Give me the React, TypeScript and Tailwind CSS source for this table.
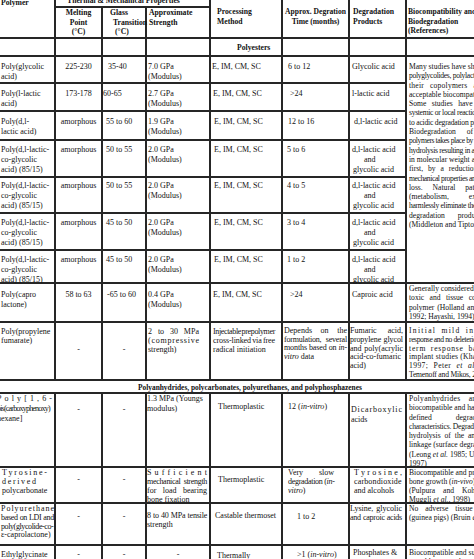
import React from "react";

type N = React.ReactNode;

const bd = "border-r-2 border-b-2 border-[#262626]";

function C({ c = "", children }: { c?: string; children?: N }) {
  return <div className={`${bd} whitespace-nowrap ${c}`}>{children}</div>;
}

// spread words (or letters) across the line, like justified print
function J({ w, c = "" }: { w: N[]; c?: string }) {
  return (
    <div className={`flex justify-between ${c}`}>
      {w.map((x, i) => (
        <span key={i}>{x}</span>
      ))}
    </div>
  );
}

const letters = (s: string) => s.split("");
const words = (s: string) => s.split(" ");

function Plga({ glass, time, pt }: { glass: string; time: string; pt: string }) {
  return (
    <>
      <C c={`pl-[4px] ${pt}`}>
        <div>Poly(d,l-lactic-</div>
        <div>co-glycolic</div>
        <div>acid) (85/15)</div>
      </C>
      <C c={`text-center ${pt}`}>amorphous</C>
      <C c={`pl-[3px] ${pt}`}>{glass}</C>
      <C c={`pl-[1px] ${pt}`}>
        <div>2.0 GPa</div>
        <div>(Modulus)</div>
      </C>
      <C c={`pl-[3px] ${pt}`}>E, IM, CM, SC</C>
      <C c={`pl-[4px] ${pt}`}>{time}</C>
      <C c={pt}>
        <div className="pl-[2px]">d,l-lactic acid</div>
        <div className="pl-[14px]">and</div>
        <div className="pl-[3px]">glycolic acid</div>
      </C>
    </>
  );
}

export default function App() {
  return (
    <div className="w-[474px] h-[559px] overflow-hidden bg-white">
      <div className="mt-[-8px] ml-[-3px] w-max grid grid-cols-[59px_47px_44px_64px_72px_67px_57px_110px] grid-rows-[16px_31px_18px_27px_28px_29px_37px_36px_37px_33px_39px_58px_13px_74px_36px_42px_40px] font-['Liberation_Serif',serif] text-[8px] leading-[10px] text-[#111]">
        {/* header */}
        <C c="row-span-2 pl-[4px] pt-[6px] font-bold text-[7.7px]">Polymer</C>
        <C c="col-span-3 pl-[11px] pt-[4px] font-bold text-[7.7px] leading-[9.5px]">Thermal &amp; Mechanical Properties</C>
        <C c="row-span-2 pl-[6px] pt-[15px] font-bold text-[7.7px] leading-[9.5px]">
          <div>Processing</div>
          <div>Method</div>
        </C>
        <C c="row-span-2 text-center pt-[15px] font-bold text-[7.6px] leading-[9.5px]">
          <div>Approx. Degration</div>
          <div>Time (months)</div>
        </C>
        <C c="row-span-2 pl-[3px] pt-[15px] font-bold text-[7.7px] leading-[9.5px]">
          <div>Degradation</div>
          <div>Products</div>
        </C>
        <C c="row-span-2 pl-[1px] pt-[15px] font-bold text-[7.6px] leading-[9.5px]">
          <div>Biocompatibility and</div>
          <div>Biodegradation</div>
          <div>(References)</div>
        </C>
        <C c="text-center font-bold text-[7.7px] leading-[9.5px]">
          <div>Melting</div>
          <div>Point</div>
          <div>(°C)</div>
        </C>
        <C c="font-bold text-[7.7px] leading-[9.5px]">
          <div className="pl-[7px]">Glass</div>
          <div className="pl-[10px]">Transition</div>
          <div className="pl-[12px]">(°C)</div>
        </C>
        <C c="pl-[2px] font-bold text-[7.7px] leading-[9.5px]">
          <div>Approximate</div>
          <div>Strength</div>
        </C>

        {/* polyesters */}
        <C />
        <C />
        <C />
        <C />
        <C c="pl-[26px] pt-[4px] font-bold text-[7.7px]">Polyesters</C>
        <C />
        <C />
        <C />

        {/* poly(glycolic acid) */}
        <C c="pl-[4px] pt-[5px]">
          <div>Poly(glycolic</div>
          <div>acid)</div>
        </C>
        <C c="text-center pt-[5px]">225-230</C>
        <C c="pl-[5px] pt-[5px]">35-40</C>
        <C c="pl-[1px] pt-[5px]">
          <div>7.0 GPa</div>
          <div>(Modulus)</div>
        </C>
        <C c="pl-[1px] pt-[5px]">E, IM, CM, SC</C>
        <C c="pl-[5px] pt-[5px]">6 to 12</C>
        <C c="pl-[2px] pt-[5px]">Glycolic acid</C>
        <C c="row-span-7 pl-[2px] pt-[5px] text-[7.6px] leading-[9.3px]">
          <div>Many studies have shown that</div>
          <div className="tracking-[-0.3px]">polyglycolides, polylactides and</div>
          <div className="tracking-[0.2px] [word-spacing:4px]">their copolymers are</div>
          <div>acceptable biocompatible.</div>
          <div className="[word-spacing:3.5px]">Some studies have shown</div>
          <div className="tracking-[-0.3px]">systemic or local reactions due</div>
          <div className="tracking-[-0.2px]">to acidic degradation products.</div>
          <div className="[word-spacing:9px]">Biodegradation of these</div>
          <div className="tracking-[-0.4px]">polymers takes place by bulk</div>
          <div className="tracking-[-0.3px]">hydrolysis resulting in a decrease</div>
          <div>in molecular weight at</div>
          <div className="[word-spacing:3px]">first, by a reduction in</div>
          <div className="tracking-[-0.4px]">mechanical properties and mass</div>
          <div className="[word-spacing:8px]">loss. Natural pathways</div>
          <div className="[word-spacing:18px]">(metabolism, excretion)</div>
          <div className="tracking-[-0.3px]">harmlessly eliminate the</div>
          <div className="[word-spacing:11px]">degradation products</div>
          <div>(Middleton and Tipton, 2000)</div>
        </C>

        {/* poly(l-lactic acid) */}
        <C c="pl-[4px] pt-[5px]">
          <div>Poly(l-lactic</div>
          <div>acid)</div>
        </C>
        <C c="text-center pt-[5px]">173-178</C>
        <C c="pl-[0px] pt-[5px]">60-65</C>
        <C c="pl-[1px] pt-[5px]">
          <div>2.7 GPa</div>
          <div>(Modulus)</div>
        </C>
        <C c="pl-[2px] pt-[5px]">E, IM, CM, SC</C>
        <C c="pl-[7px] pt-[5px]">&gt;24</C>
        <C c="pl-[2px] pt-[5px]">l-lactic acid</C>

        {/* poly(d,l-lactic acid) */}
        <C c="pl-[4px] pt-[5px]">
          <div>Poly(d,l-</div>
          <div>lactic acid)</div>
        </C>
        <C c="text-center pt-[5px]">amorphous</C>
        <C c="pl-[3px] pt-[5px]">55 to 60</C>
        <C c="pl-[1px] pt-[5px]">
          <div>1.9 GPa</div>
          <div>(Modulus)</div>
        </C>
        <C c="pl-[3px] pt-[5px]">E, IM, CM, SC</C>
        <C c="pl-[5px] pt-[5px]">12 to 16</C>
        <C c="pl-[4px] pt-[5px]">d,l-lactic acid</C>

        <Plga glass="50 to 55" time="5 to 6" pt="pt-[4px]" />
        <Plga glass="50 to 55" time="4 to 5" pt="pt-[3px]" />
        <Plga glass="45 to 50" time="3 to 4" pt="pt-[4px]" />
        <Plga glass="45 to 50" time="1 to 2" pt="pt-[4px]" />

        {/* poly(caprolactone) */}
        <C c="pl-[4px] pt-[6px]">
          <div>Poly(capro</div>
          <div>lactone)</div>
        </C>
        <C c="text-center pt-[6px]">58 to 63</C>
        <C c="pl-[4px] pt-[6px]">-65 to 60</C>
        <C c="pl-[1px] pt-[6px]">
          <div>0.4 GPa</div>
          <div>(Modulus)</div>
        </C>
        <C c="pl-[2px] pt-[6px]">E, IM, CM, SC</C>
        <C c="pl-[7px] pt-[6px]">&gt;24</C>
        <C c="pl-[2px] pt-[6px]">Caproic acid</C>
        <C c="pl-[2px] pt-0 text-[7.6px] leading-[9.3px]">
          <div>Generally considered non-</div>
          <div className="[word-spacing:3.5px]">toxic and tissue compatible</div>
          <div className="[word-spacing:1px]">polymer (Holland and Tighe,</div>
          <div>1992; Hayashi, 1994)</div>
        </C>

        {/* poly(propylene fumarate) */}
        <C c="pl-[4px] pt-[4px] leading-[9px]">
          <div>Poly(propylene</div>
          <div>fumarate)</div>
        </C>
        <C c="text-center pt-[22px]">-</C>
        <C c="text-center pt-[22px]">-</C>
        <C c="pl-[1px] pr-[10px] pt-[4px] leading-[9px]">
          <J w={words("2 to 30 MPa")} />
          <J w={letters("(compressive")} />
          <div>strength)</div>
        </C>
        <C c="pl-[2px] pr-[6px] pt-[4px] leading-[9px]">
          <J w={words("Injectable prepolymer")} c="tracking-[-0.35px]" />
          <J w={words("cross-linked via free")} c="tracking-[-0.1px]" />
          <div>radical initiation</div>
        </C>
        <C c="pl-[1px] pr-[1px] pt-[4px] leading-[8.7px]">
          <J w={words("Depends on the")} />
          <J w={words("formulation, several")} c="tracking-[-0.2px]" />
          <J w={["months", "based", "on", <i>in-</i>]} c="tracking-[-0.1px]" />
          <div>
            <i>vitro</i> data
          </div>
        </C>
        <C c="pl-[0px] pr-[2px] pt-[4px] leading-[8.8px]">
          <J w={words("Fumaric acid,")} />
          <J w={words("propylene glycol")} c="tracking-[-0.1px]" />
          <J w={words("and poly(acrylic")} />
          <div>acid-co-fumaric</div>
          <div>acid)</div>
        </C>
        <C c="pl-[2px] pt-[4px] text-[7.6px] leading-[8.8px]">
          <div className="tracking-[1.3px] [word-spacing:2px]">Initial mild inflammatory</div>
          <div className="tracking-[-0.4px]">response and no deleterious long</div>
          <div className="tracking-[0.8px] [word-spacing:2px]">term response based on</div>
          <div className="tracking-[0.2px]">
            implant studies (Khan <i>et al.</i>,
          </div>
          <div className="tracking-[0.4px] [word-spacing:3px]">
            1997; Peter <i>et al.</i> 1998;
          </div>
          <div className="tracking-[-0.2px]">Temenoff and Mikos, 2000)</div>
        </C>

        {/* section */}
        <div className="col-span-8 border-b-2 border-[#262626] pl-[141px] pt-[2px] font-bold text-[7.4px] leading-[9px] whitespace-nowrap">
          Polyanhydrides, polycarbonates, polyurethanes, and polyphosphazenes
        </div>

        {/* poly[1,6-bis(carboxyphenoxy)hexane] */}
        <C c="pl-0 pr-[2px] pt-0 leading-[10px]">
          <J w={letters("Poly[1,6-")} />
          <div className="tracking-[-0.8px]">bis(carboxyphenoxy)</div>
          <div>hexane]</div>
        </C>
        <C c="text-center pt-[11px]">-</C>
        <C c="text-center pt-[11px]">-</C>
        <C c="pl-0 pt-0">
          <div>1.3 MPa (Youngs</div>
          <div>modulus)</div>
        </C>
        <C c="pl-[7px] pt-[8px]">Thermoplastic</C>
        <C c="pl-[5px] pt-[8px]">
          12 (<i>in-vitro</i>)
        </C>
        <C c="pt-[11px]">
          <J w={letters("Dicarboxylic")} c="pl-[1px] pr-[3px]" />
          <div className="pl-[1px]">acids</div>
        </C>
        <C c="pl-[2px] pt-0 text-[7.6px] leading-[9.3px]">
          <div className="tracking-[0.3px] [word-spacing:6px]">Polyanhydrides are</div>
          <div>biocompatible and have well</div>
          <div className="[word-spacing:22px]">defined degradation</div>
          <div className="tracking-[-0.2px]">characteristics. Degradation by</div>
          <div className="[word-spacing:2px]">hydrolysis of the anhydride</div>
          <div>linkage (surface degradation)</div>
          <div>
            (Leong <i>et al.</i> 1985; Uhrich <i>et al.</i>,
          </div>
          <div>1997)</div>
        </C>

        {/* tyrosine-derived polycarbonate */}
        <C c="pl-[5px] pt-0 leading-[9px]">
          <J w={letters("Tyrosine-")} c="pr-[7px]" />
          <J w={letters("derived")} c="pr-[18px]" />
          <div>polycarbonate</div>
        </C>
        <C c="text-center pt-[7px]">-</C>
        <C c="text-center pt-[7px]">-</C>
        <C c="pl-0 pr-[2px] pt-0 leading-[9px]">
          <J w={letters("Sufficient")} />
          <J w={words("mechanical strength")} c="tracking-[-0.3px]" />
          <J w={words("for load bearing")} />
          <div>bone fixation</div>
        </C>
        <C c="pl-[7px] pt-[7px]">Thermoplastic</C>
        <C c="pl-[5px] pt-0 leading-[9px]">
          <J w={words("Very slow")} c="w-[46px]" />
          <div className="tracking-[-0.3px]">
            degradation (<i>in-</i>
          </div>
          <div>
            <i>vitro</i>)
          </div>
        </C>
        <C c="pl-[4px] pr-[3px] pt-0 leading-[9px]">
          <J w={letters("Tyrosine,")} />
          <div className="tracking-[0.15px]">carbondioxide</div>
          <div>and alcohols</div>
        </C>
        <C c="pl-[2px] pt-0 text-[7.6px] leading-[9px]">
          <div>Biocompatible and promotes</div>
          <div>
            bone growth (<i>in-vivo</i>)
          </div>
          <div className="[word-spacing:6px]">(Pulpura and Kohn, 1994;</div>
          <div>
            Muggli <i>et al.</i>, 1998)
          </div>
        </C>

        {/* polyurethane */}
        <C c="pl-[4px] pt-[1px] leading-[8.8px]">
          <J w={letters("Polyurethane")} />
          <J w={words("based on LDI and")} c="tracking-[-0.3px]" />
          <div className="tracking-[-0.4px]">poly(glycolide-co-</div>
          <div>ε-caprolactone)</div>
        </C>
        <C c="text-center pt-[8px]">-</C>
        <C c="text-center pt-[8px]">-</C>
        <C c="pl-0 pr-[2px] pt-[7px] leading-[9px]">
          <J w={words("8 to 40 MPa tensile")} c="tracking-[-0.2px]" />
          <div>strength</div>
        </C>
        <C c="pl-[4px] pt-[7px]">Castable thermoset</C>
        <C c="pl-[14px] pt-[8px]">1 to 2</C>
        <C c="pl-0 pr-[3px] pt-0 leading-[9px]">
          <J w={words("Lysine, glycolic")} />
          <J w={words("and caproic acids")} c="tracking-[-0.25px]" />
        </C>
        <C c="pl-[2px] pt-0 text-[7.6px] leading-[9px]">
          <div className="[word-spacing:5px]">No adverse tissue reaction</div>
          <div>
            (guinea pigs) (Bruin <i>et al.</i>, 1990)
          </div>
        </C>

        {/* ethylglycinate polyphosphazene */}
        <C c="pl-[4px] pt-[4px]">
          <div>Ethylglycinate</div>
          <div>polyphosphazene</div>
        </C>
        <C c="text-center pt-[4px]">-</C>
        <C c="text-center pt-[4px]">-</C>
        <C c="text-center pt-[4px]">-</C>
        <C c="pl-[6px] pt-[5px]">
          <div>Thermally</div>
          <div>cross-linked</div>
        </C>
        <C c="pl-[14px] pt-[4px]">
          &gt;1 (<i>in-vitro</i>)
        </C>
        <C c="pl-[3px] pt-[2px]">
          <div>Phosphates &amp;</div>
          <div>ammonia</div>
        </C>
        <C c="pl-[2px] pt-[2px] text-[7.6px] leading-[9.3px]">
          <div>Biocompatible and supports</div>
          <div>osteoblast growth</div>
        </C>
      </div>
    </div>
  );
}
